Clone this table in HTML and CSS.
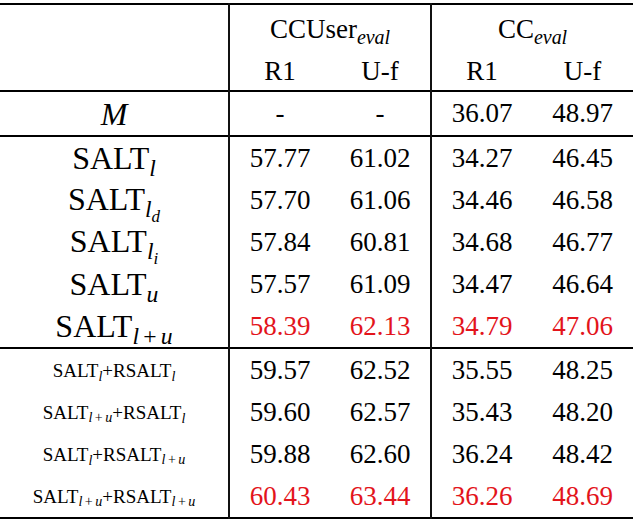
FILE: index.html
```html
<!DOCTYPE html>
<html>
<head>
<meta charset="utf-8">
<link rel="stylesheet" href="styles.css">
</head>
<body>
<table class="results">
  <colgroup>
    <col class="c-label"><col class="c-num"><col class="c-num"><col class="c-num"><col class="c-num">
  </colgroup>
  <thead>
    <tr class="h1">
      <th class="label"></th>
      <th colspan="2" class="grp">CCUser<sub class="sb">eval</sub></th>
      <th colspan="2" class="grp sep">CC<sub class="sb">eval</sub></th>
    </tr>
    <tr class="h2">
      <th class="label"></th>
      <th>R1</th><th>U-f</th><th class="sep">R1</th><th>U-f</th>
    </tr>
  </thead>
  <tbody class="base">
    <tr class="mrow">
      <td class="label"><i class="m">M</i></td>
      <td>-</td><td>-</td><td class="sep">36.07</td><td>48.97</td>
    </tr>
  </tbody>
  <tbody class="single">
    <tr>
      <td class="label big">SALT<sub class="sb">l</sub></td>
      <td>57.77</td><td>61.02</td><td class="sep">34.27</td><td>46.45</td>
    </tr>
    <tr>
      <td class="label big">SALT<sub class="sb">l<sub class="sb2">d</sub></sub></td>
      <td>57.70</td><td>61.06</td><td class="sep">34.46</td><td>46.58</td>
    </tr>
    <tr>
      <td class="label big">SALT<sub class="sb">l<sub class="sb2">i</sub></sub></td>
      <td>57.84</td><td>60.81</td><td class="sep">34.68</td><td>46.77</td>
    </tr>
    <tr>
      <td class="label big">SALT<sub class="sb">u</sub></td>
      <td>57.57</td><td>61.09</td><td class="sep">34.47</td><td>46.64</td>
    </tr>
    <tr class="best">
      <td class="label big">SALT<sub class="sb">l<span class="op">+</span>u</sub></td>
      <td>58.39</td><td>62.13</td><td class="sep">34.79</td><td>47.06</td>
    </tr>
  </tbody>
  <tbody class="combo">
    <tr>
      <td class="label small">SALT<sub class="sb">l</sub>+RSALT<sub class="sb">l</sub></td>
      <td>59.57</td><td>62.52</td><td class="sep">35.55</td><td>48.25</td>
    </tr>
    <tr>
      <td class="label small">SALT<sub class="sb">l<span class="op">+</span>u</sub>+RSALT<sub class="sb">l</sub></td>
      <td>59.60</td><td>62.57</td><td class="sep">35.43</td><td>48.20</td>
    </tr>
    <tr>
      <td class="label small">SALT<sub class="sb">l</sub>+RSALT<sub class="sb">l<span class="op">+</span>u</sub></td>
      <td>59.88</td><td>62.60</td><td class="sep">36.24</td><td>48.42</td>
    </tr>
    <tr class="best">
      <td class="label small">SALT<sub class="sb">l<span class="op">+</span>u</sub>+RSALT<sub class="sb">l<span class="op">+</span>u</sub></td>
      <td>60.43</td><td>63.44</td><td class="sep">36.26</td><td>48.69</td>
    </tr>
  </tbody>
</table>
</body>
</html>
```

FILE: styles.css
```css
html, body {
  margin: 0;
  padding: 0;
  background: #fff;
}

body {
  font-family: "Liberation Serif", "Times New Roman", serif;
  color: #000;
}

.results {
  border-collapse: collapse;
  table-layout: fixed;
  width: 633px;
  margin-top: 3px;
}

.c-label { width: 229px; }
.c-num { width: 101px; }

.results td,
.results th {
  padding: 0;
  text-align: center;
  vertical-align: middle;
  font-weight: normal;
  font-family: "Liberation Serif", "Times New Roman", serif;
  font-size: 27px;
  line-height: 1;
  white-space: nowrap;
}

.results .label {
  border-right: 2px solid #111;
}

.results .sep {
  border-left: 2px solid #111;
}

.h1 {
  border-top: 2px solid #000;
}

.h1 th {
  height: 45px;
  padding-top: 2px;
}

.h2 th {
  height: 38px;
}

.base {
  border-top: 2px solid #000;
}

.mrow td {
  height: 43px;
}

.m {
  font-style: italic;
  font-size: 32px;
}

.single {
  border-top: 2px solid #000;
}

.single td {
  height: 42px;
}

.combo {
  border-top: 2px solid #000;
  border-bottom: 2px solid #000;
}

.combo td {
  height: 42px;
}

.results .big {
  font-size: 32px;
}

.results .small {
  font-size: 19px;
}

.sb {
  font-style: italic;
  font-size: 0.74em;
  vertical-align: -0.28em;
  line-height: 0;
}

.sb2 {
  font-style: italic;
  font-size: 0.72em;
  vertical-align: -0.3em;
  line-height: 0;
}

.op {
  font-style: normal;
  margin: 0 0.18em;
}

.best td:not(.label) {
  color: #e3141b;
}
```
